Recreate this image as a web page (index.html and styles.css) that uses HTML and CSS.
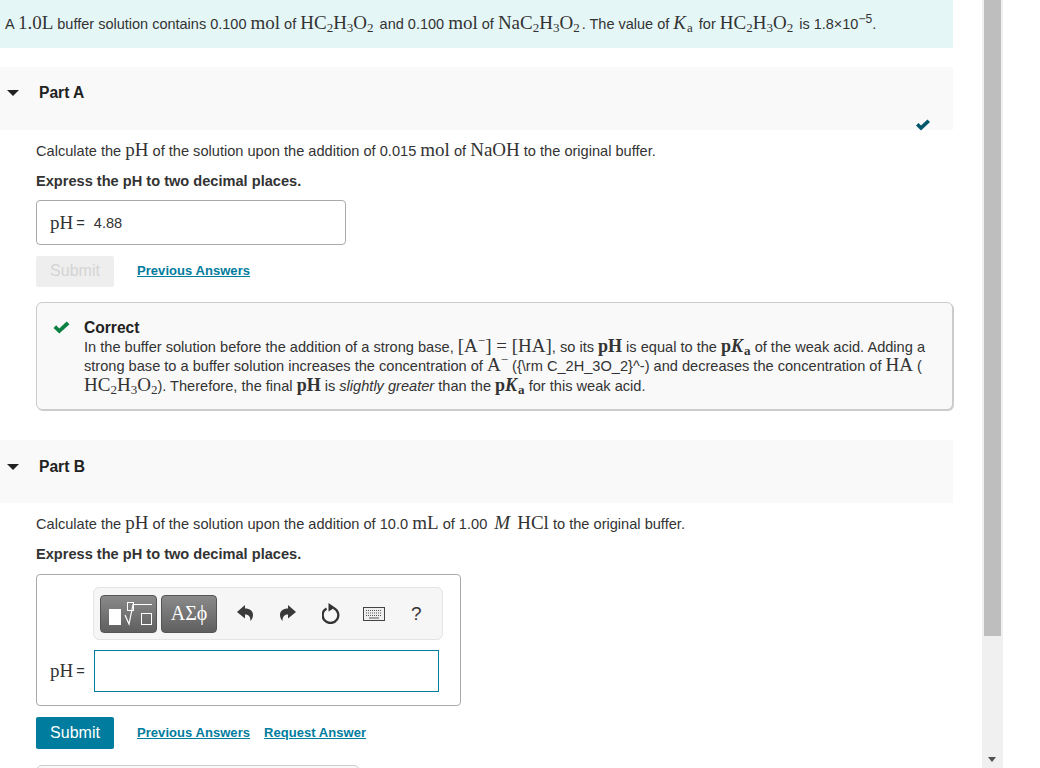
FILE: index.html
```html
<!DOCTYPE html>
<html lang="en">

<head>
    <meta charset="UTF-8">
    <title>Buffer solution</title>
    <link rel="stylesheet" href="styles.css">
</head>

<body>
    <div class="page">
        <div class="main">
            <div class="intro">A <span class="m">1.0L</span> buffer solution contains 0.100 <span class="m">mol</span> of <span class="m">HC<sub>2</sub>H<sub>3</sub>O<sub>2</sub></span> and 0.100 <span class="m">mol</span> of <span class="m">NaC<sub>2</sub>H<sub>3</sub>O<sub>2</sub></span>. The value of <span class="m"><i>K</i><sub>a</sub></span> for <span class="m">HC<sub>2</sub>H<sub>3</sub>O<sub>2</sub></span> is 1.8×10<sup>−5</sup>.</div>

            <!-- Part A -->
            <div class="part part-a">
                <div class="part-head">
                    <span class="tri"></span>
                    <span class="part-title">Part A</span>
                </div>
                <svg class="part-check" width="16" height="12" viewBox="0 0 16 12"><path d="M1 6.5 L3.5 4 L6 6.6 L12.5 .6 L15 3 L6 11.5 Z" fill="#00566b"/></svg>
                <div class="part-body">
                    <p class="question">Calculate the <span class="m">pH</span> of the solution upon the addition of 0.015 <span class="m">mol</span> of <span class="m">NaOH</span> to the original buffer.</p>
                    <p class="instruction">Express the pH to two decimal places.</p>
                    <div class="answer-box answer-done"><span class="m">pH</span> <span class="eq">=</span> <span class="value">4.88</span></div>
                    <div class="actions">
                        <button class="submit submit-off">Submit</button>
                        <a class="link" href="#">Previous Answers</a>
                    </div>
                    <div class="feedback">
                        <svg class="feedback-check" width="17" height="13" viewBox="0 0 17 13"><path d="M.5 7 L3.2 4.2 L6.3 7.4 L13.6 .5 L16.5 3.2 L6.3 12.6 Z" fill="#0b8043"/></svg>
                        <div>
                            <div class="feedback-title">Correct</div>
                            <div class="feedback-text">In the buffer solution before the addition of a strong base, <span class="m">[A<sup>−</sup>] = [HA]</span>, so its <span class="m b">pH</span> is equal to the <span class="m b">p<i>K</i><sub>a</sub></span> of the weak acid. Adding a<br>strong base to a buffer solution increases the concentration of <span class="m">A<sup>−</sup></span> ({\rm C_2H_3O_2}^-) and decreases the concentration of <span class="m">HA</span> (<br><span class="m">HC<sub>2</sub>H<sub>3</sub>O<sub>2</sub></span>). Therefore, the final <span class="m b">pH</span> is <em>slightly greater</em> than the <span class="m b">p<i>K</i><sub>a</sub></span> for this weak acid.</div>
                        </div>
                    </div>
                </div>
            </div>

            <!-- Part B -->
            <div class="part part-b">
                <div class="part-head">
                    <span class="tri"></span>
                    <span class="part-title">Part B</span>
                </div>
                <div class="part-body">
                    <p class="question">Calculate the <span class="m">pH</span> of the solution upon the addition of 10.0 <span class="m">mL</span> of 1.00 <span class="m molar"><i>M</i></span> <span class="m">HCl</span> to the original buffer.</p>
                    <p class="instruction">Express the pH to two decimal places.</p>
                    <div class="answer-box answer-edit">
                        <div class="toolbar">
                            <button class="tool-btn tool-templates">
                                <svg class="tool-svg" width="55" height="36" viewBox="0 0 55 36">
                                    <rect x="8" y="13" width="12" height="16" fill="#fff"/>
                                    <rect x="26.500" y="6.500" width="6" height="8" fill="none" stroke="#fff"/>
                                    <path d="M24 19 L28 28 L32 8.500 H51" fill="none" stroke="#fff" stroke-width="1.200"/>
                                    <rect x="40.500" y="17.500" width="10" height="11" fill="none" stroke="#fff"/>
                                </svg>
                            </button>
                            <button class="tool-btn tool-greek">ΑΣϕ</button>
                            <svg class="tool-icon icon-undo" width="16" height="17" viewBox="0 0 16 17"><path d="M0 7 L8 0 V3.500 C13 3.500 16 6 16 10 C16 12 15 14.500 13.500 16 C13.500 12 12 9.500 8 9.500 V13.500 Z" fill="#3a3a3a"/></svg>
                            <svg class="tool-icon icon-redo" width="16" height="17" viewBox="0 0 16 17"><path d="M16 7 L8 0 V3.500 C3 3.500 0 6 0 10 C0 12 1 14.500 2.500 16 C2.500 12 4 9.500 8 9.500 V13.500 Z" fill="#3a3a3a"/></svg>
                            <svg class="tool-icon icon-reset" width="18" height="21" viewBox="0 0 18 21"><path d="M11.500 5 A7.800 7.800 0 1 1 4.500 5.500" fill="none" stroke="#333" stroke-width="2.300"/><path d="M6.500 0 L13 4.500 L6.500 8.500 Z" fill="#333"/></svg>
                            <svg class="tool-icon icon-keys" width="22" height="14" viewBox="0 0 22 14">
                                <rect x=".5" y=".5" width="21" height="13" fill="#eee" stroke="#444"/>
                                <path d="M3 3.500 H19 M3 6 H19 M3 8.500 H19" stroke="#555" stroke-dasharray="1 1"/>
                                <path d="M6 11 H16" stroke="#555"/>
                            </svg>
                            <span class="tool-help">?</span>
                        </div>
                        <div class="input-row">
                            <span class="m">pH</span> <span class="eq">=</span>
                            <div class="input"></div>
                        </div>
                    </div>
                    <div class="actions actions-b">
                        <button class="submit">Submit</button>
                        <a class="link" href="#">Previous Answers</a>
                        <a class="link link-next" href="#">Request Answer</a>
                    </div>
                    <div class="next-box"></div>
                </div>
            </div>
        </div>

        <div class="scrollbar">
            <div class="scroll-thumb"></div>
            <div class="scroll-arrow"></div>
        </div>
    </div>
</body>

</html>
```

FILE: styles.css
```css
html,
body {
    margin: 0;
    height: 100%;
    overflow: hidden;
    background-color: #FFFFFF;
}

body {
    font-family: "Liberation Sans", Arial, sans-serif;
    font-size: 14.6px;
    line-height: 20px;
    color: #333333;
}

.page {
    display: flex;
    height: 768px;
    overflow: hidden;
}

.main {
    width: 953px;
    flex-shrink: 0;
}

/* math text */
.m {
    font-family: "Liberation Serif", serif;
    font-size: 19px;
    line-height: 0;
}

.m sub,
.m sup {
    font-size: 13px;
    line-height: 0;
}

.m sub {
    vertical-align: -3px;
}

.m i {
    margin-right: 1px;
}

.m.molar {
    margin: 0 2px 0 3px;
}

.b {
    font-weight: bold;
    font-size: 18px;
}

sup {
    line-height: 0;
}

.intro {
    height: 48px;
    padding: 14px 0 0 5px;
    box-sizing: border-box;
    font-size: 14.5px;
    background-color: #E5F6F7;
    white-space: nowrap;
}

.intro sub:last-child {
    margin-right: 2px;
}

.part {
    position: relative;
}

.part-a {
    margin-top: 19px;
}

.part-b {
    margin-top: 30px;
}

.part-head {
    display: flex;
    height: 63px;
    padding-top: 16px;
    box-sizing: border-box;
    background-color: #F9F9F9;
}

.part-b .part-head {
    padding-top: 17px;
}

.tri {
    width: 0;
    height: 0;
    margin: 7px 20px 0 7px;
    border-left: 6px solid transparent;
    border-right: 6px solid transparent;
    border-top: 6px solid #222222;
}

.part-title {
    font-size: 15.6px;
    font-weight: bold;
    color: #222222;
}

.part-check {
    position: absolute;
    top: 52px;
    left: 915px;
}

.part-body {
    padding: 11px 0 0 36px;
}

.question {
    margin: 0;
    white-space: nowrap;
}

.instruction {
    margin: 10px 0 0;
    font-weight: bold;
}

.answer-box {
    border: 1px solid #AAAAAA;
    border-radius: 4px;
    box-sizing: border-box;
}

.answer-done {
    display: flex;
    align-items: center;
    gap: 3px;
    width: 310px;
    height: 45px;
    margin-top: 9px;
    padding-left: 13px;
}

.value {
    margin-left: 6px;
}

.actions {
    display: flex;
    align-items: center;
    margin-top: 11px;
}

.submit {
    width: 78px;
    height: 31px;
    padding: 0;
    font-family: inherit;
    font-size: 16px;
    color: #FFFFFF;
    background-color: #007C9E;
    border: none;
    border-radius: 2px;
}

.submit-off {
    padding-bottom: 2px;
    color: #D4D4D4;
    background-color: #EEEEEE;
}

.submit-off + .link {
    margin-bottom: 2px;
}

.actions-b .submit {
    height: 32px;
}

.link {
    margin-left: 23px;
    font-size: 13px;
    font-weight: bold;
    letter-spacing: .05px;
    color: #007C9E;
}

.link-next {
    margin-left: 14px;
}

.feedback {
    display: flex;
    gap: 14px;
    height: 108px;
    margin-top: 15px;
    padding: 15px 0 0 16px;
    box-sizing: border-box;
    background-color: #F9F9F9;
    border: 1px solid #CCCCCC;
    border-radius: 6px;
    box-shadow: 1px 1px 0 #CCCCCC;
}

.feedback-check {
    margin-top: 3px;
    flex-shrink: 0;
}

.feedback-title {
    font-size: 15.6px;
    font-weight: bold;
    color: #222222;
}

.feedback-text {
    line-height: 19.250px;
    white-space: nowrap;
}

.answer-edit {
    width: 425px;
    height: 132px;
    margin-top: 10px;
    padding: 12px 0 0 13px;
}

.toolbar {
    display: flex;
    align-items: center;
    width: 350px;
    height: 53px;
    margin-left: 43px;
    padding-left: 6px;
    box-sizing: border-box;
    background-color: #F6F6F6;
    border: 1px solid #E4E4E4;
    border-radius: 6px;
}

.tool-btn {
    height: 38px;
    padding: 0;
    color: #FFFFFF;
    background: linear-gradient(#8A8A8A, #5F5F5F);
    border: 1px solid #555555;
    border-radius: 4px;
}

.tool-svg {
    display: block;
}

.tool-templates {
    width: 57px;
}

.tool-greek {
    width: 56px;
    margin-left: 4px;
    font-family: "Liberation Serif", serif;
    font-size: 20px;
}

.icon-undo {
    margin-left: 20px;
}

.icon-redo {
    margin-left: 27px;
}

.icon-reset {
    margin-left: 26px;
}

.icon-keys {
    margin-left: 23px;
}

.tool-help {
    margin-left: 26px;
    font-size: 19px;
}

.input-row {
    display: flex;
    align-items: center;
    gap: 3px;
    margin-top: 10px;
}

.input {
    width: 345px;
    height: 42px;
    margin-left: 6px;
    box-sizing: border-box;
    border: 1px solid #007C9E;
}

.next-box {
    width: 324px;
    height: 30px;
    margin-top: 16px;
    box-sizing: border-box;
    background-color: #F9F9F9;
    border: 1px solid #CCCCCC;
    border-radius: 6px;
}

.scrollbar {
    position: relative;
    width: 21px;
    margin-left: 29px;
    background-color: #F0F0F0;
    flex-shrink: 0;
}

.scroll-thumb {
    width: 17px;
    height: 636px;
    margin-left: 2px;
    background-color: #BEBEBE;
}

.scroll-arrow {
    position: absolute;
    left: 6px;
    top: 757px;
    width: 0;
    height: 0;
    border-left: 4.500px solid transparent;
    border-right: 4.500px solid transparent;
    border-top: 5px solid #505050;
}
```
